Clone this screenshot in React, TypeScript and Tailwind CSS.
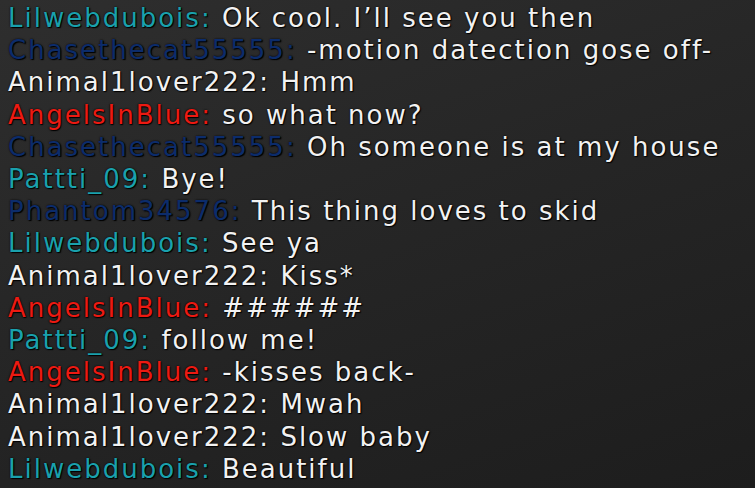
type Line = { name: string; color: string; text: string };

const TEAL = "text-[#1aa1ad]";
const NAVY = "text-[#0c2c6b]";
const RED = "text-[#ec1a12]";
const WHITE = "text-[#f2f2f2]";

const lines: Line[] = [
  { name: "Lilwebdubois", color: TEAL, text: "Ok cool. I\u2019ll see you then" },
  { name: "Chasethecat55555", color: NAVY, text: "-motion datection gose off-" },
  { name: "Animal1lover222", color: WHITE, text: "Hmm" },
  { name: "AngelsInBlue", color: RED, text: "so what now?" },
  { name: "Chasethecat55555", color: NAVY, text: "Oh someone is at my house" },
  { name: "Pattti_09", color: TEAL, text: "Bye!" },
  { name: "Phantom34576", color: NAVY, text: "This thing loves to skid" },
  { name: "Lilwebdubois", color: TEAL, text: "See ya" },
  { name: "Animal1lover222", color: WHITE, text: "Kiss*" },
  { name: "AngelsInBlue", color: RED, text: "######" },
  { name: "Pattti_09", color: TEAL, text: "follow me!" },
  { name: "AngelsInBlue", color: RED, text: "-kisses back-" },
  { name: "Animal1lover222", color: WHITE, text: "Mwah" },
  { name: "Animal1lover222", color: WHITE, text: "Slow baby" },
  { name: "Lilwebdubois", color: TEAL, text: "Beautiful" },
];

export default function App() {
  return (
    <div className="w-[755px] h-[488px] overflow-hidden bg-[linear-gradient(160deg,#2e2e2e_0%,#262626_45%,#1d1d1d_100%)] px-2 pt-[2px] font-['DejaVu_Sans',sans-serif] text-[26px] leading-[32.2px] tracking-[2px] [text-shadow:0_0_2px_#000,1px_1px_1px_#000]">
      {lines.map((l, i) => (
        <div key={i} className="whitespace-nowrap">
          <span className={l.color}>{l.name}:</span>{" "}
          <span className={WHITE}>{l.text}</span>
        </div>
      ))}
    </div>
  );
}
